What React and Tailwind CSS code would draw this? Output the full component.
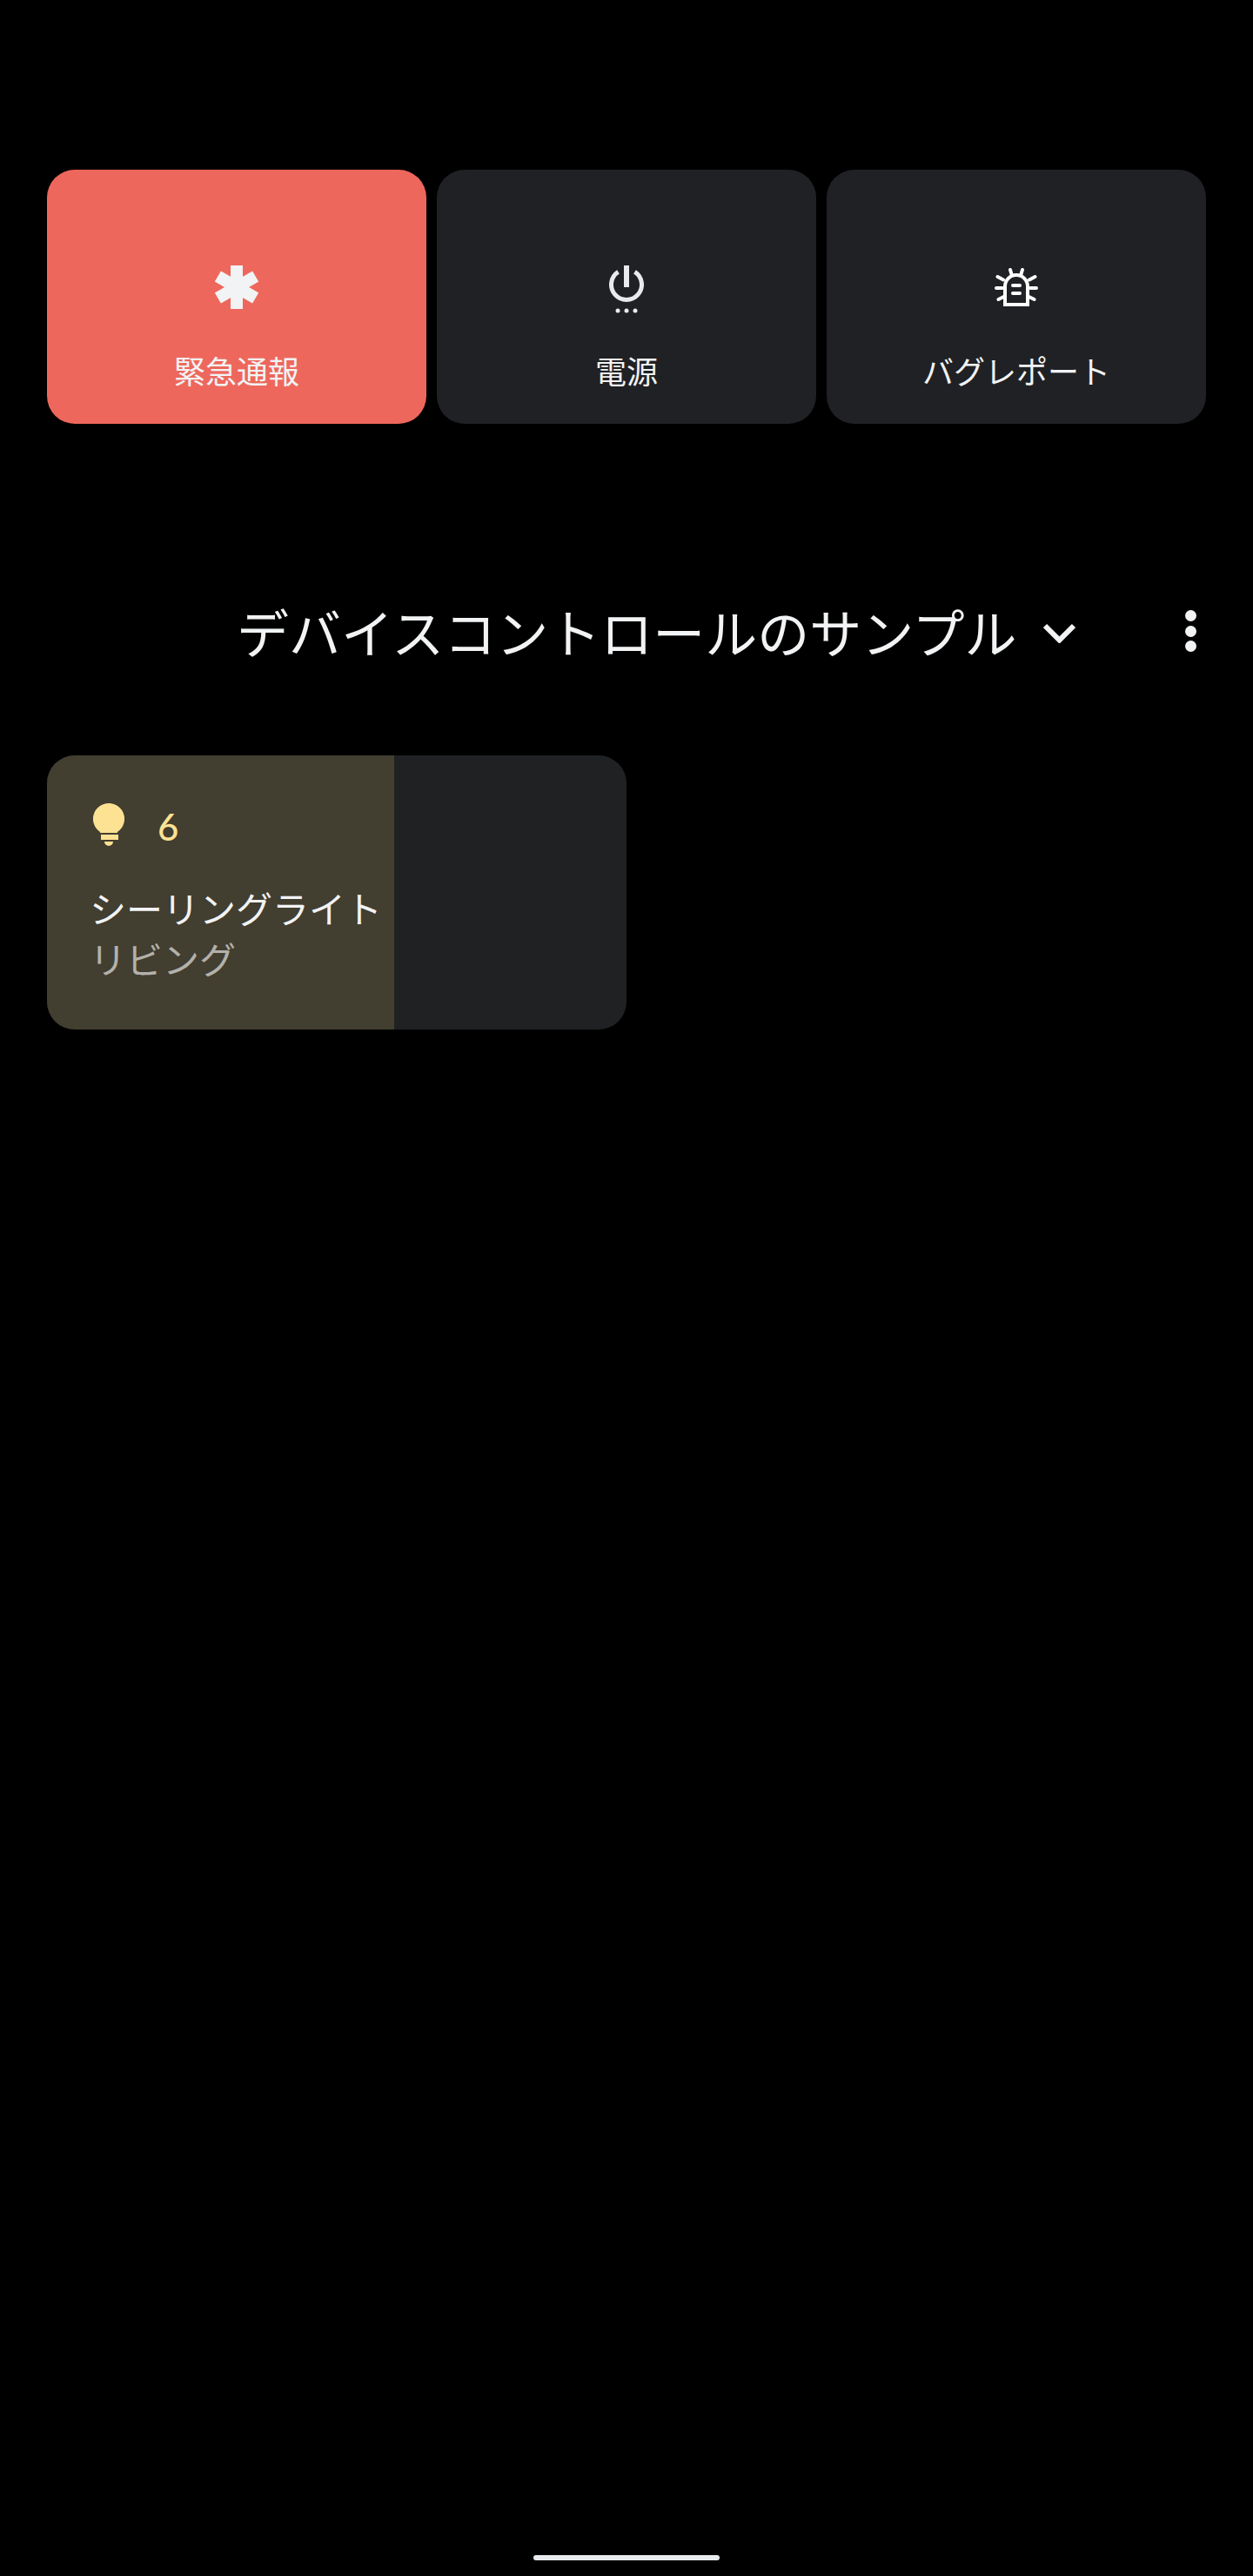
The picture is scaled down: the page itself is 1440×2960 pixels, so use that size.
const EmergencyIcon = () => (
  <svg width="50" height="50" viewBox="0 0 50 50" fill="#f1f3f4">
    <rect x="18" y="0" width="14" height="50" />
    <rect x="18" y="0" width="14" height="50" transform="rotate(60 25 25)" />
    <rect x="18" y="0" width="14" height="50" transform="rotate(120 25 25)" />
  </svg>
)

const PowerIcon = () => (
  <svg width="40" height="55" viewBox="0 0 40 55" fill="#e8eaed">
    <rect x="17" y="0" width="6" height="25" />
    <path d="M10.5 7.3A17.5 17.5 0 1 0 29.5 7.3" fill="none" stroke="#e8eaed" strokeWidth="5" />
    <circle cx="10" cy="52" r="2.5" />
    <circle cx="20" cy="52" r="2.5" />
    <circle cx="30" cy="52" r="2.5" />
  </svg>
)

const BugIcon = () => (
  <svg className="mt-[3px]" width="50" height="44" viewBox="0 0 50 44" fill="none" stroke="#ffffff" strokeWidth="4">
    <path d="M12 42V21A13 13 0 0 1 38 21V42Z" />
    <path d="M21 20H29M21 29H29" strokeLinecap="round" />
    <path d="M2 23H9M41 23H48M3.5 10L10 13.5M46.5 10L40 13.5M4.5 36L10.5 33M45.5 36L39.5 33M18 2L19.5 7M32 2L30.5 7" strokeLinecap="round" />
  </svg>
)

const BulbIcon = () => (
  <svg width="36" height="49" viewBox="0 0 36 49">
    <path d="M18 0A18 18 0 0 1 28 33V34H8V33A18 18 0 0 1 18 0Z" fill="#fde293" />
    <rect x="9" y="36" width="20" height="6" fill="#fde293" />
    <path d="M13 44H23A5 5 0 0 1 13 44Z" fill="#fde293" />
  </svg>
)

const actions = [
  { label: '緊急通報', icon: <EmergencyIcon />, bg: 'bg-[#ee675c]' },
  { label: '電源', icon: <PowerIcon />, bg: 'bg-[#202124]' },
  { label: 'バグレポート', icon: <BugIcon />, bg: 'bg-[#202124]' }
]

const ActionCard = ({ label, icon, bg }) => (
  <div className={`${bg} h-[292px] rounded-[32px] flex flex-col items-center pt-[110px]`}>
    <div className="h-[55px] flex items-start justify-center">{icon}</div>
    <p className="mt-[37px] text-[36px] leading-[56px] text-[#f1f3f4]">{label}</p>
  </div>
)

export default function App() {
  return (
    <div className="w-[1440px] h-[2960px] bg-black px-[54px] pt-[195px] flex flex-col font-['Noto_Sans_CJK_JP',sans-serif]">
      <div className="grid grid-cols-3 gap-[12px]">
        {actions.map((action) => (
          <ActionCard key={action.label} {...action} />
        ))}
      </div>

      <div className="mt-[198px] h-[80px] flex items-center text-[#f1f3f4]">
        <div className="pl-[218px] flex items-center">
          <p className="text-[60px] leading-[80px] whitespace-nowrap">デバイスコントロールのサンプル</p>
          <svg className="ml-[31px] mt-[4px]" width="37" height="23" viewBox="0 0 37 23" fill="none" stroke="#f1f3f4" strokeWidth="6">
            <path d="M2 3L18.5 19.5L35 3" />
          </svg>
        </div>
        <div className="ml-auto mr-[11px] flex flex-col gap-[4.5px]">
          <span className="block w-[13px] h-[13px] rounded-full bg-[#f1f3f4]" />
          <span className="block w-[13px] h-[13px] rounded-full bg-[#f1f3f4]" />
          <span className="block w-[13px] h-[13px] rounded-full bg-[#f1f3f4]" />
        </div>
      </div>

      <div className="mt-[103px] w-[666px] h-[315px] rounded-[32px] overflow-hidden flex bg-[#202122]">
        <div className="w-[399px] bg-[#423e30] pl-[49px] pt-[51px]">
          <div className="ml-[4px] flex items-center">
            <BulbIcon />
            <span className="ml-[38px] mt-[6px] text-[42px] leading-[50px] font-medium text-[#fde293] font-['Lato',sans-serif]">6</span>
          </div>
          <p className="mt-[39px] text-[42px] leading-[58px] whitespace-nowrap text-[#f1f3f4]">シーリングライト</p>
          <p className="text-[42px] leading-[58px] text-[#b3b1ab]">リビング</p>
        </div>
      </div>

      <div className="mt-auto mb-[18px] mx-auto w-[214px] h-[6px] rounded-full bg-[#e8eaed]" />
    </div>
  )
}
